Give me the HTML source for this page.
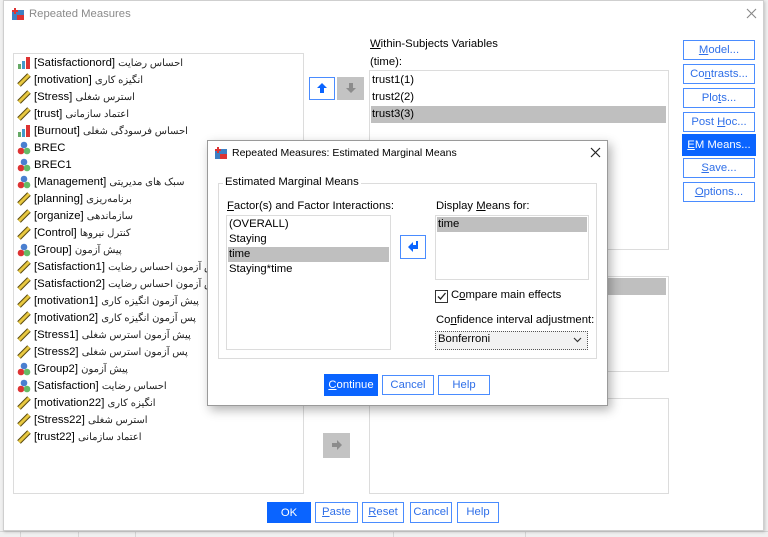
<!DOCTYPE html>
<html><head><meta charset="utf-8"><style>
*{margin:0;padding:0;box-sizing:border-box}
body{width:768px;height:537px;overflow:hidden;background:#f0f0f0;font-family:"Liberation Sans","Noto Sans CJK SC",sans-serif;font-size:11.3px;color:#000;position:relative}
.a{position:absolute}
.box{position:absolute;background:#fff;border:1px solid #dcdcdc}
.btn{position:absolute;border:1px solid #4a8cff;background:#fff;color:#2f6fe8;text-align:center;font-size:11.3px;line-height:18px}
.btnf{position:absolute;background:#0a64ff;color:#fff;text-align:center;font-size:11.3px;line-height:20px;border:1px solid #0a64ff}
.row{position:absolute;left:20px;height:17px;line-height:17px;white-space:nowrap}
.row svg{position:absolute;left:-3px;top:1px}
.row span{position:absolute;left:14px}
.fa{font-size:10px;color:#222}
u{text-decoration:underline}
.gl{position:absolute;background:#d6d6d6}
</style></head><body>
<div class="gl" style="left:0;top:531px;width:768px;height:1px"></div>
<div class="gl" style="left:20px;top:531px;width:1px;height:6px"></div>
<div class="gl" style="left:78px;top:531px;width:1px;height:6px"></div>
<div class="gl" style="left:135px;top:531px;width:1px;height:6px"></div>
<div class="gl" style="left:393px;top:531px;width:1px;height:6px"></div>
<div class="gl" style="left:525px;top:531px;width:1px;height:6px"></div>

<div class="a" style="left:3px;top:0;width:761px;height:531px;background:#fff;border:1px solid #cfcfcf;box-shadow:1px 1px 3px rgba(0,0,0,.2)"></div>
<svg class="a" style="left:11px;top:7px" width="14" height="14"><rect x="1" y="3" width="12" height="10" fill="#3c7fc4"/><rect x="6" y="8" width="7" height="5" fill="#d33"/><path d="M4 1v6M1 4h6" stroke="#d33" stroke-width="2"/></svg>
<div class="a" style="left:29px;top:8px;color:#8a8a8a;font-size:11.3px">Repeated Measures</div>
<svg class="a" style="left:746px;top:8px" width="11" height="11"><path d="M1 1L10 10M10 1L1 10" stroke="#888" stroke-width="1.1"/></svg>

<div class="box" style="left:13px;top:53px;width:291px;height:441px"></div>
<div id="lst" class="a" style="left:0;top:55px;width:300px"></div>

<div class="btn" style="left:309px;top:77px;width:26px;height:23px"></div>
<svg class="a" style="left:314px;top:81px" width="16" height="14"><path d="M8 2 L3 7 H6 V12 H10 V7 H13Z" fill="#0a64ff"/></svg>
<div class="a" style="left:337px;top:77px;width:27px;height:23px;background:#c3c3c3"></div>
<svg class="a" style="left:343px;top:81px" width="16" height="14"><path d="M8 12 L3 7 H6 V2 H10 V7 H13Z" fill="#8c8c8c"/></svg>

<div class="a" style="left:370px;top:38px"><u>W</u>ithin-Subjects Variables</div>
<div class="a" style="left:370px;top:56px">(time):</div>
<div class="box" style="left:369px;top:70px;width:300px;height:180px"></div>
<div class="a" style="left:372px;top:74px">trust1(1)</div>
<div class="a" style="left:372px;top:91px">trust2(2)</div>
<div class="a" style="left:371px;top:106px;width:295px;height:17px;background:#bfbfbf"></div>
<div class="a" style="left:372px;top:108px">trust3(3)</div>

<div class="box" style="left:369px;top:276px;width:300px;height:96px"></div>
<div class="a" style="left:371px;top:278px;width:295px;height:17px;background:#bfbfbf"></div>
<div class="box" style="left:369px;top:398px;width:300px;height:96px"></div>
<div class="a" style="left:323px;top:433px;width:27px;height:25px;background:#c3c3c3"></div>
<svg class="a" style="left:329px;top:438px" width="16" height="14"><path d="M13 7 L8 2 V5 H3 V9 H8 V12Z" fill="#8c8c8c"/></svg>

<div class="btn" style="left:683px;top:40px;width:72px;height:20px"><u>M</u>odel...</div>
<div class="btn" style="left:683px;top:64px;width:72px;height:20px">Co<u>n</u>trasts...</div>
<div class="btn" style="left:683px;top:88px;width:72px;height:20px">Plo<u>t</u>s...</div>
<div class="btn" style="left:683px;top:112px;width:72px;height:20px">Post <u>H</u>oc...</div>
<div class="btnf" style="left:682px;top:134px;width:74px;height:22px"><u>E</u>M Means...</div>
<div class="btn" style="left:683px;top:158px;width:72px;height:20px"><u>S</u>ave...</div>
<div class="btn" style="left:683px;top:182px;width:72px;height:20px"><u>O</u>ptions...</div>

<div class="btnf" style="left:267px;top:502px;width:44px;height:21px">OK</div>
<div class="btn" style="left:315px;top:502px;width:43px;height:21px"><u>P</u>aste</div>
<div class="btn" style="left:362px;top:502px;width:42px;height:21px"><u>R</u>eset</div>
<div class="btn" style="left:410px;top:502px;width:42px;height:21px">Cancel</div>
<div class="btn" style="left:457px;top:502px;width:42px;height:21px">Help</div>

<div class="a" style="left:207px;top:140px;width:401px;height:266px;background:#fff;border:1px solid #9a9a9a;box-shadow:3px 4px 10px rgba(0,0,0,.3)"></div>
<svg class="a" style="left:214px;top:146px" width="14" height="14"><rect x="1" y="3" width="12" height="10" fill="#3c7fc4"/><rect x="6" y="8" width="7" height="5" fill="#d33"/><path d="M4 1v6M1 4h6" stroke="#d33" stroke-width="2"/></svg>
<div class="a" style="left:232px;top:147px;font-size:10.5px">Repeated Measures: Estimated Marginal Means</div>
<svg class="a" style="left:590px;top:147px" width="11" height="11"><path d="M1 1L10 10M10 1L1 10" stroke="#222" stroke-width="1.2"/></svg>
<div class="a" style="left:218px;top:183px;width:379px;height:176px;border:1px solid #dcdcdc"></div>
<div class="a" style="left:223px;top:176px;background:#fff;padding:0 2px">Estimated Marginal Means</div>
<div class="a" style="left:227px;top:200px"><u>F</u>actor(s) and Factor Interactions:</div>
<div class="box" style="left:226px;top:215px;width:165px;height:135px"></div>
<div class="a" style="left:229px;top:218px">(OVERALL)</div>
<div class="a" style="left:229px;top:233px">Staying</div>
<div class="a" style="left:228px;top:247px;width:161px;height:15px;background:#bfbfbf"></div>
<div class="a" style="left:229px;top:248px">time</div>
<div class="a" style="left:229px;top:263px">Staying*time</div>
<div class="btn" style="left:400px;top:235px;width:26px;height:24px"></div>
<svg class="a" style="left:405px;top:240px" width="16" height="14"><path d="M3 7 L8 2 V5 H11 V1 H13 V9 H8 V12Z" fill="#0a64ff"/></svg>
<div class="a" style="left:436px;top:200px">Display <u>M</u>eans for:</div>
<div class="box" style="left:435px;top:215px;width:154px;height:65px"></div>
<div class="a" style="left:437px;top:217px;width:150px;height:15px;background:#bfbfbf"></div>
<div class="a" style="left:438px;top:218px">time</div>
<div class="a" style="left:435px;top:290px;width:13px;height:13px;border:1px solid #333"></div>
<svg class="a" style="left:436px;top:291px" width="11" height="11"><path d="M2 5.5 L4.5 8 L9.5 2" stroke="#222" stroke-width="1.3" fill="none"/></svg>
<div class="a" style="left:451px;top:289px">C<u>o</u>mpare main effects</div>
<div class="a" style="left:436px;top:314px">Co<u>n</u>fidence interval adjustment:</div>
<div class="a" style="left:435px;top:331px;width:153px;height:19px;background:#f2f2f2;border:1px dotted #555"></div>
<div class="a" style="left:438px;top:333px">Bonferroni</div>
<svg class="a" style="left:573px;top:337px" width="9" height="6"><path d="M1 1 L4.5 4.5 L8 1" stroke="#333" fill="none" stroke-width="1.2"/></svg>
<div class="btnf" style="left:324px;top:374px;width:54px;height:22px"><u>C</u>ontinue</div>
<div class="btn" style="left:382px;top:375px;width:52px;height:20px">Cancel</div>
<div class="btn" style="left:438px;top:375px;width:52px;height:20px">Help</div>

<script>
var items=[["b","[Satisfactionord]","احساس رضایت"],["r","[motivation]","انگیزه کاری"],["r","[Stress]","استرس شغلی"],["r","[trust]","اعتماد سازمانی"],["b","[Burnout]","احساس فرسودگی شغلی"],["n","BREC",""],["n","BREC1",""],["n","[Management]","سبک های مدیریتی"],["r","[planning]","برنامه‌ریزی"],["r","[organize]","سازماندهی"],["r","[Control]","کنترل نیروها"],["n","[Group]","پیش آزمون"],["r","[Satisfaction1]","پیش آزمون احساس رضایت"],["r","[Satisfaction2]","پس آزمون احساس رضایت"],["r","[motivation1]","پیش آزمون انگیزه کاری"],["r","[motivation2]","پس آزمون انگیزه کاری"],["r","[Stress1]","پیش آزمون استرس شغلی"],["r","[Stress2]","پس آزمون استرس شغلی"],["n","[Group2]","پیش آزمون"],["n","[Satisfaction]","احساس رضایت"],["r","[motivation22]","انگیزه کاری"],["r","[Stress22]","استرس شغلی"],["r","[trust22]","اعتماد سازمانی"]];
var ic={r:'<svg width="14" height="14"><path d="M2 12 L12 2" stroke="#5a4a10" stroke-width="5"/><path d="M2 12 L12 2" stroke="#e8c840" stroke-width="3"/></svg>',
b:'<svg width="14" height="14"><rect x="1" y="8" width="3" height="5" fill="#6a6"/><rect x="5" y="5" width="3" height="8" fill="#49c"/><rect x="9" y="1" width="4" height="12" fill="#d33"/></svg>',
n:'<svg width="14" height="14"><circle cx="7" cy="4" r="3.3" fill="#4a7fd0"/><circle cx="4" cy="10" r="3.3" fill="#d33"/><circle cx="10" cy="10" r="3.3" fill="#6b6"/></svg>'};
var h="";items.forEach(function(it,i){h+='<div class="row" style="top:'+(i*17)+'px">'+ic[it[0]]+'<span>'+it[1]+' <span class="fa" style="position:static" dir="rtl">'+it[2]+'</span></span></div>';});
document.getElementById("lst").innerHTML=h;
</script>
</body></html>
